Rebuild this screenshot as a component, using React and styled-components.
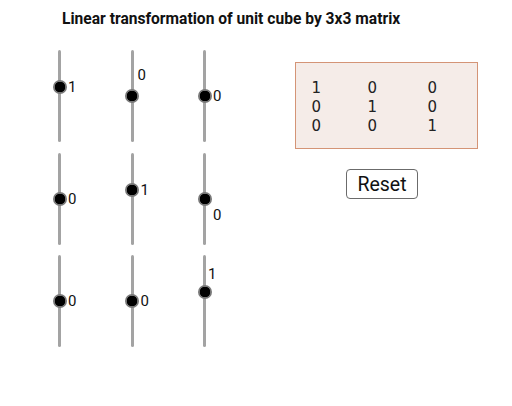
import styled, { createGlobalStyle } from "styled-components";

const GlobalStyle = createGlobalStyle`
  body {
    margin: 0;
    background: #ffffff;
    font-family: Roboto, "Liberation Sans", sans-serif;
  }
`;

const Page = styled.div`
  width: 512px;
  height: 406px;
  overflow: hidden;
  background: #ffffff;
`;

const Title = styled.h1`
  margin: 0;
  padding: 10px 0 0 62px;
  height: 40px;
  box-sizing: border-box;
  font-size: 15.6px;
  font-weight: 700;
  color: #111;
`;

const Main = styled.div`
  display: flex;
  padding-top: 10px;
`;

const SliderGrid = styled.div`
  display: grid;
  grid-template-columns: repeat(3, 72.5px);
  grid-auto-rows: 102.5px;
  padding-left: 58px;
`;

const Slider = styled.div`
  position: relative;
  width: 72px;
  height: 92px;
`;

const Track = styled.div`
  width: 3px;
  height: 92px;
  border-radius: 1.5px;
  background: #a3a3a3;
`;

const Knob = styled.div`
  position: absolute;
  left: -5.5px;
  width: 14px;
  height: 14px;
  margin-top: -7px;
  border-radius: 50%;
  background: radial-gradient(circle, #000 0 5px, #777 5.5px 7px);
`;

const ValueLabel = styled.span`
  position: absolute;
  font-size: 15px;
  line-height: 16px;
  color: #111;
  margin-top: -8px;
`;

const Panel = styled.div`
  display: flex;
  flex-direction: column;
  align-items: center;
  margin-left: 19px;
  padding-top: 12px;
`;

const MatrixBox = styled.div`
  width: 183px;
  height: 87px;
  box-sizing: border-box;
  border: 1.5px solid #d49476;
  background: #f5ece8;
  padding: 16px 0 0 16px;
  display: grid;
  grid-template-columns: 56px 60px 40px;
  grid-auto-rows: 19px;
  font-family: "DejaVu Sans", sans-serif;
  font-size: 15px;
  line-height: 19px;
  color: #222;
`;

const ResetButton = styled.button`
  margin-top: 20px;
  margin-right: 8px;
  height: 30px;
  padding: 0 10px;
  background: #fff;
  border: 1px solid #6b6b6b;
  border-radius: 4px;
  font-family: Roboto, "Liberation Sans", sans-serif;
  font-size: 19.5px;
  color: #111;
`;

const sliders = [
  { v: 1, dx: 10, dy: 0 },
  { v: 0, dx: 7, dy: -21 },
  { v: 0, dx: 10, dy: 0 },
  { v: 0, dx: 10, dy: 0 },
  { v: 1, dx: 10, dy: 0 },
  { v: 0, dx: 10, dy: 16 },
  { v: 0, dx: 10, dy: 0 },
  { v: 0, dx: 10, dy: 0 },
  { v: 1, dx: 5, dy: -18 },
];

const matrix = [
  [1, 0, 0],
  [0, 1, 0],
  [0, 0, 1],
];

const App = () => (
  <Page>
    <GlobalStyle />
    <Title>Linear transformation of unit cube by 3x3 matrix</Title>
    <Main>
      <SliderGrid>
        {sliders.map((s, i) => {
          const y = 46 - s.v * 9;
          return (
            <Slider key={i}>
              <Track />
              <Knob style={{ top: y }} />
              <ValueLabel style={{ top: y + s.dy, left: s.dx }}>{s.v}</ValueLabel>
            </Slider>
          );
        })}
      </SliderGrid>
      <Panel>
        <MatrixBox>
          {matrix.flat().map((n, i) => (
            <span key={i}>{n}</span>
          ))}
        </MatrixBox>
        <ResetButton>Reset</ResetButton>
      </Panel>
    </Main>
  </Page>
);

export default App;
